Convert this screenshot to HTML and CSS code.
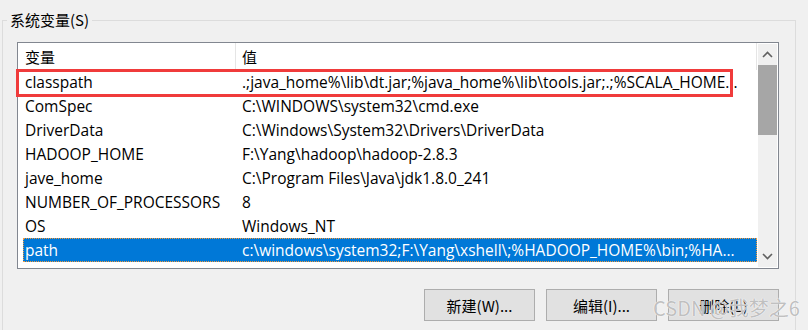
FILE: index.html
```html
<!DOCTYPE html>
<html lang="zh-CN">
<head>
<meta charset="utf-8">
<link rel="stylesheet" href="styles.css">
</head>
<body>
<fieldset class="group">
  <legend class="legend">系统变量(S)</legend>
  <div class="list">
    <div class="table">
      <div class="head">
        <div class="hcell c1">变量</div>
        <div class="hcell c2">值</div>
      </div>
      <div class="row"><div class="cell c1">classpath</div><div class="cell c2">.;java_home%\lib\dt.jar;%java_home%\lib\tools.jar;.;%SCALA_HOME...</div></div>
      <div class="row"><div class="cell c1">ComSpec</div><div class="cell c2">C:\WINDOWS\system32\cmd.exe</div></div>
      <div class="row"><div class="cell c1">DriverData</div><div class="cell c2">C:\Windows\System32\Drivers\DriverData</div></div>
      <div class="row"><div class="cell c1">HADOOP_HOME</div><div class="cell c2">F:\Yang\hadoop\hadoop-2.8.3</div></div>
      <div class="row"><div class="cell c1">jave_home</div><div class="cell c2">C:\Program Files\Java\jdk1.8.0_241</div></div>
      <div class="row"><div class="cell c1">NUMBER_OF_PROCESSORS</div><div class="cell c2">8</div></div>
      <div class="row"><div class="cell c1">OS</div><div class="cell c2">Windows_NT</div></div>
      <div class="row selected"><div class="cell c1">path</div><div class="cell c2">c:\windows\system32;F:\Yang\xshell\;%HADOOP_HOME%\bin;%HA...</div></div>
      <div class="mark"></div>
    </div>
    <div class="scrollbar">
      <div class="sbtn">
        <svg width="11" height="7" viewBox="0 0 11 7"><path d="M1 6 L5.5 1.5 L10 6" fill="none" stroke="#606060" stroke-width="1.6"/></svg>
      </div>
      <div class="thumb"></div>
      <div class="track"></div>
      <div class="sbtn">
        <svg width="11" height="7" viewBox="0 0 11 7"><path d="M1 1 L5.5 5.5 L10 1" fill="none" stroke="#606060" stroke-width="1.6"/></svg>
      </div>
    </div>
  </div>
  <div class="buttons">
    <div class="btn">新建(W)...</div>
    <div class="btn">编辑(I)...</div>
    <div class="btn">删除(L)</div>
  </div>
  <div class="watermark">CSDN @我梦之6</div>
</fieldset>
</body>
</html>
```

FILE: styles.css
```css
html, body {
  margin: 0;
  padding: 0;
  background: #f0f0f0;
  width: 808px;
  height: 330px;
  overflow: hidden;
  font-family: "Open Sans", "Noto Sans CJK SC", sans-serif;
  font-size: 15.5px;
  color: #000;
}
body {
  padding-top: 10px;
  box-sizing: border-box;
}
.group {
  position: relative;
  margin: 0 0 0 2px;
  padding: 0;
  width: 794px;
  height: 320px;
  box-sizing: border-box;
  border: 1px solid #dcdcdc;
  border-bottom: none;
}
.legend {
  margin-left: 4px;
  padding: 0 3px;
  line-height: 20px;
  height: 20px;
  font-family: "Noto Sans CJK SC", sans-serif;
  font-size: 15px;
}
.list {
  margin: 12px 0 0 14px;
  width: 762px;
  height: 227px;
  box-sizing: border-box;
  border: 1px solid #828790;
  background: #fff;
  display: flex;
}
.table {
  position: relative;
  width: 740px;
  display: flex;
  flex-direction: column;
}
.head {
  display: flex;
  height: 27px;
  align-items: stretch;
}
.hcell {
  line-height: 27px;
  border-right: 1px solid #e5e5e5;
  box-sizing: border-box;
  font-family: "Noto Sans CJK SC", sans-serif;
  font-size: 15px;
}
.hcell.c1 {
  width: 218px;
  padding-left: 7px;
}
.hcell.c2 {
  width: 521px;
  padding-left: 6px;
}
.row {
  display: flex;
  margin-left: 5px;
  width: 734px;
  height: 24px;
  box-sizing: border-box;
  line-height: 22px;
  border: 1px solid transparent;
}
.cell {
  white-space: nowrap;
  overflow: hidden;
}
.cell.c1 {
  width: 212px;
  padding-left: 1px;
  box-sizing: border-box;
}
.cell.c2 {
  flex: 1;
  padding-left: 6px;
}
.row.selected {
  background: #0078d7;
  color: #fff;
  border: 1px dotted #f59a3a;
}
.mark {
  position: absolute;
  left: -2px;
  top: 26px;
  width: 717px;
  height: 28px;
  box-sizing: border-box;
  border: 3px solid #f03b3b;
}
.scrollbar {
  width: 19px;
  margin: 1px 0 1px 0;
  background: #f0f0f0;
  display: flex;
  flex-direction: column;
}
.sbtn {
  height: 21px;
  display: flex;
  align-items: center;
  justify-content: center;
}
.thumb {
  height: 70px;
  background: #a6a6a6;
}
.track {
  flex: 1;
}
.buttons {
  display: flex;
  justify-content: flex-end;
  gap: 11px;
  margin-top: 20px;
  width: 776px;
}
.btn {
  width: 111px;
  height: 32px;
  box-sizing: border-box;
  border: 1px solid #adadad;
  background: #e1e1e1;
  display: flex;
  align-items: center;
  justify-content: center;
  font-family: "Noto Sans CJK SC", sans-serif;
  font-size: 15px;
}
.watermark {
  position: absolute;
  left: 650px;
  top: 263px;
  font-family: "Noto Sans CJK SC", sans-serif;
  font-size: 20px;
  line-height: 30px;
  color: rgba(150, 150, 150, 0.6);
  text-shadow: 0 0 1px #fff, 0 0 1px #fff;
  white-space: nowrap;
}
```
